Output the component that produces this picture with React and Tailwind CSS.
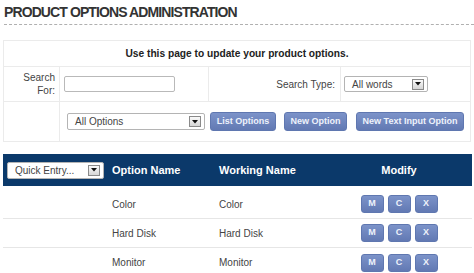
import React from "react";

const rows = [
  { name: "Color", working: "Color" },
  { name: "Hard Disk", working: "Hard Disk" },
  { name: "Monitor", working: "Monitor" },
];

// little grey arrow box used in the fake selects
const SelectArrow = () => (
  <span className="flex h-[11px] w-[12px] items-center justify-center border border-[#8a8a8a] bg-linear-to-b from-[#fafafa] to-[#d6d6d6]">
    <svg width="6" height="4" viewBox="0 0 6 4">
      <path d="M0 0 L6 0 L3 3.5 Z" fill="#111" />
    </svg>
  </span>
);

const FakeSelect = ({ label, className }) => (
  <div
    className={`flex items-center justify-between rounded-[2px] border border-[#b4b4b4] bg-white pl-[7px] pr-[3px] text-[10px] font-normal text-[#444] ${className}`}
  >
    <span>{label}</span>
    <SelectArrow />
  </div>
);

const BlueButton = ({ children, className }) => (
  <button
    className={`rounded-[3px] border border-[#5f77b0] bg-linear-to-b from-[#7c93c9] to-[#6279b3] text-[9px] font-bold text-[#eef2fb] ${className}`}
  >
    {children}
  </button>
);

export default function App() {
  return (
    <div className="h-[273px] w-[474px] overflow-hidden bg-white font-['Liberation_Sans',Arial,sans-serif] text-[10px] text-[#444]">
      {/* Title */}
      <h1 className="pl-[4px] pt-[4px] text-[14px] font-bold uppercase leading-[16px] tracking-[-0.9px] text-[#333]">
        Product Options Administration
      </h1>
      <div className="ml-[4px] mt-[4px] border-t border-dashed border-[#b0b0b0]" />

      {/* Search box */}
      <div className="ml-[3px] mt-[15px] w-[468px] border border-[#ebebeb]">
        <div className="flex h-[26px] items-center justify-center border-b border-[#ebebeb] text-[10.2px] font-bold text-[#222]">
          Use this page to update your product options.
        </div>

        <div className="flex h-[35px] border-b border-[#ebebeb]">
          <div className="flex w-[56px] items-center justify-end border-r border-[#ebebeb] pr-[4px] text-right leading-[13px]">
            <span>
              Search
              <br />
              For:
            </span>
          </div>
          <div className="flex w-[149px] items-center border-r border-[#ebebeb] pl-[4px]">
            <input className="h-[16px] w-[111px] rounded-[2px] border border-[#b9b9b9] bg-white outline-none" />
          </div>
          <div className="flex w-[132px] items-center justify-end border-r border-[#ebebeb] pr-[5px] text-[10px]">
            Search Type:
          </div>
          <div className="flex flex-1 items-center pl-[3px]">
            <FakeSelect label="All words" className="h-[16px] w-[84px]" />
          </div>
        </div>

        <div className="flex h-[39px]">
          <div className="w-[56px] border-r border-[#ebebeb]" />
          <div className="flex items-center pl-[7px]">
            <FakeSelect label="All Options" className="h-[17px] w-[138px]" />
            <BlueButton className="ml-[5px] h-[19px] w-[66px]">List Options</BlueButton>
            <BlueButton className="ml-[8px] h-[19px] w-[63px]">New Option</BlueButton>
            <BlueButton className="ml-[9px] h-[19px] w-[108px]">New Text Input Option</BlueButton>
          </div>
        </div>
      </div>

      {/* Options table */}
      <div className="ml-[3px] mt-[12px] w-[469px]">
        <div className="grid h-[32px] grid-cols-[105px_107px_111px_1fr] items-center bg-[#0b396a] text-[11px] font-bold text-white">
          <div className="pl-[4px]">
            <FakeSelect label="Quick Entry..." className="h-[17px] w-[97px]" />
          </div>
          <div className="pl-[4px]">Option Name</div>
          <div className="pl-[4px]">Working Name</div>
          <div className="text-center">Modify</div>
        </div>

        <div className="pt-[4px]">
          {rows.map((r, i) => (
            <div
              key={r.name}
              className={`grid h-[29px] grid-cols-[105px_107px_111px_1fr] items-center ${
                i < rows.length - 1 ? "border-b border-[#e6e6e6]" : ""
              }`}
            >
              <div />
              <div className="pl-[4px]">{r.name}</div>
              <div className="pl-[4px]">{r.working}</div>
              <div className="flex justify-center gap-[4px]">
                <BlueButton className="h-[18px] w-[23px]">M</BlueButton>
                <BlueButton className="h-[18px] w-[23px]">C</BlueButton>
                <BlueButton className="h-[18px] w-[23px]">X</BlueButton>
              </div>
            </div>
          ))}
        </div>
      </div>
    </div>
  );
}
